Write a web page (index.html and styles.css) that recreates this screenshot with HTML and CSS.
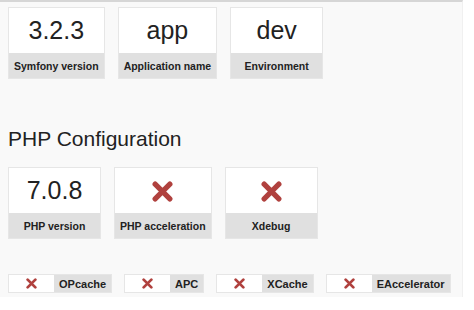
FILE: index.html
```html
<!DOCTYPE html>
<html lang="en">
<head>
    <meta charset="UTF-8">
    <title>Configuration</title>
    <link rel="stylesheet" href="styles.css">
</head>
<body>
    <div class="panel">
        <div class="metrics">
            <div class="metric">
                <span class="value">3.2.3</span>
                <span class="label">Symfony version</span>
            </div>
            <div class="metric">
                <span class="value">app</span>
                <span class="label">Application name</span>
            </div>
            <div class="metric">
                <span class="value">dev</span>
                <span class="label">Environment</span>
            </div>
        </div>

        <h2>PHP Configuration</h2>

        <div class="metrics">
            <div class="metric">
                <span class="value">7.0.8</span>
                <span class="label">PHP version</span>
            </div>
            <div class="metric">
                <span class="value">
                    <svg class="icon-no" viewBox="0 0 20 20"><path d="M3 3 L17 17 M17 3 L3 17"/></svg>
                </span>
                <span class="label">PHP acceleration</span>
            </div>
            <div class="metric">
                <span class="value">
                    <svg class="icon-no" viewBox="0 0 20 20"><path d="M3 3 L17 17 M17 3 L3 17"/></svg>
                </span>
                <span class="label">Xdebug</span>
            </div>
        </div>

        <!-- accelerators -->
        <div class="metrics metrics-inline">
            <div class="metric-inline">
                <span class="value"><svg class="icon-no-small" viewBox="0 0 20 20"><path d="M3 3 L17 17 M17 3 L3 17"/></svg></span>
                <span class="label">OPcache</span>
            </div>
            <div class="metric-inline">
                <span class="value"><svg class="icon-no-small" viewBox="0 0 20 20"><path d="M3 3 L17 17 M17 3 L3 17"/></svg></span>
                <span class="label">APC</span>
            </div>
            <div class="metric-inline">
                <span class="value"><svg class="icon-no-small" viewBox="0 0 20 20"><path d="M3 3 L17 17 M17 3 L3 17"/></svg></span>
                <span class="label">XCache</span>
            </div>
            <div class="metric-inline">
                <span class="value"><svg class="icon-no-small" viewBox="0 0 20 20"><path d="M3 3 L17 17 M17 3 L3 17"/></svg></span>
                <span class="label">EAccelerator</span>
            </div>
        </div>
    </div>
</body>
</html>
```

FILE: styles.css
```css
body {
    margin: 0;
    background-color: #fff;
    font-family: "Liberation Sans", Arial, sans-serif;
    color: #222;
}

.panel {
    width: 463px;
    height: 297px;
    box-sizing: border-box;
    background-color: #f9f9f9;
    border-top: 2px solid #d6d6d6;
    border-right: 1px solid #f0f0f0;
    padding: 5px 0 0 8px;
}

.metrics {
    display: flex;
    gap: 13px;
}

.metric {
    display: flex;
    flex-direction: column;
    min-width: 93px;
    box-sizing: border-box;
    background-color: #fff;
    border: 1px solid #e6e6e6;
}

.metric .value {
    height: 45px;
    display: flex;
    align-items: center;
    justify-content: center;
    font-size: 25px;
    color: #222;
}

.metric .label {
    height: 25px;
    display: flex;
    align-items: center;
    justify-content: center;
    padding: 0 5px;
    background-color: #e0e0e0;
    font-size: 10.5px;
    font-weight: bold;
    color: #222;
}

.icon-no {
    width: 21px;
    height: 21px;
    margin-top: 1px;
}

.icon-no path, .icon-no-small path {
    fill: none;
    stroke: #b0413e;
    stroke-width: 5;
    stroke-linecap: round;
}

h2 {
    margin: 48px 0 16px;
    font-size: 21px;
    line-height: 24px;
    font-weight: normal;
    color: #222;
}

/* accelerators row */
.metrics-inline {
    margin-top: 35px;
    gap: 12px;
}

.metric-inline {
    display: flex;
    height: 19px;
    box-sizing: border-box;
    background-color: #fff;
    border: 1px solid #e6e6e6;
}

.metric-inline .value {
    width: 45px;
    display: flex;
    align-items: center;
    justify-content: center;
}

.metric-inline .label {
    display: flex;
    align-items: center;
    padding: 0 5px;
    background-color: #e0e0e0;
    font-size: 11px;
    font-weight: bold;
}

.icon-no-small {
    width: 11px;
    height: 11px;
}
```
